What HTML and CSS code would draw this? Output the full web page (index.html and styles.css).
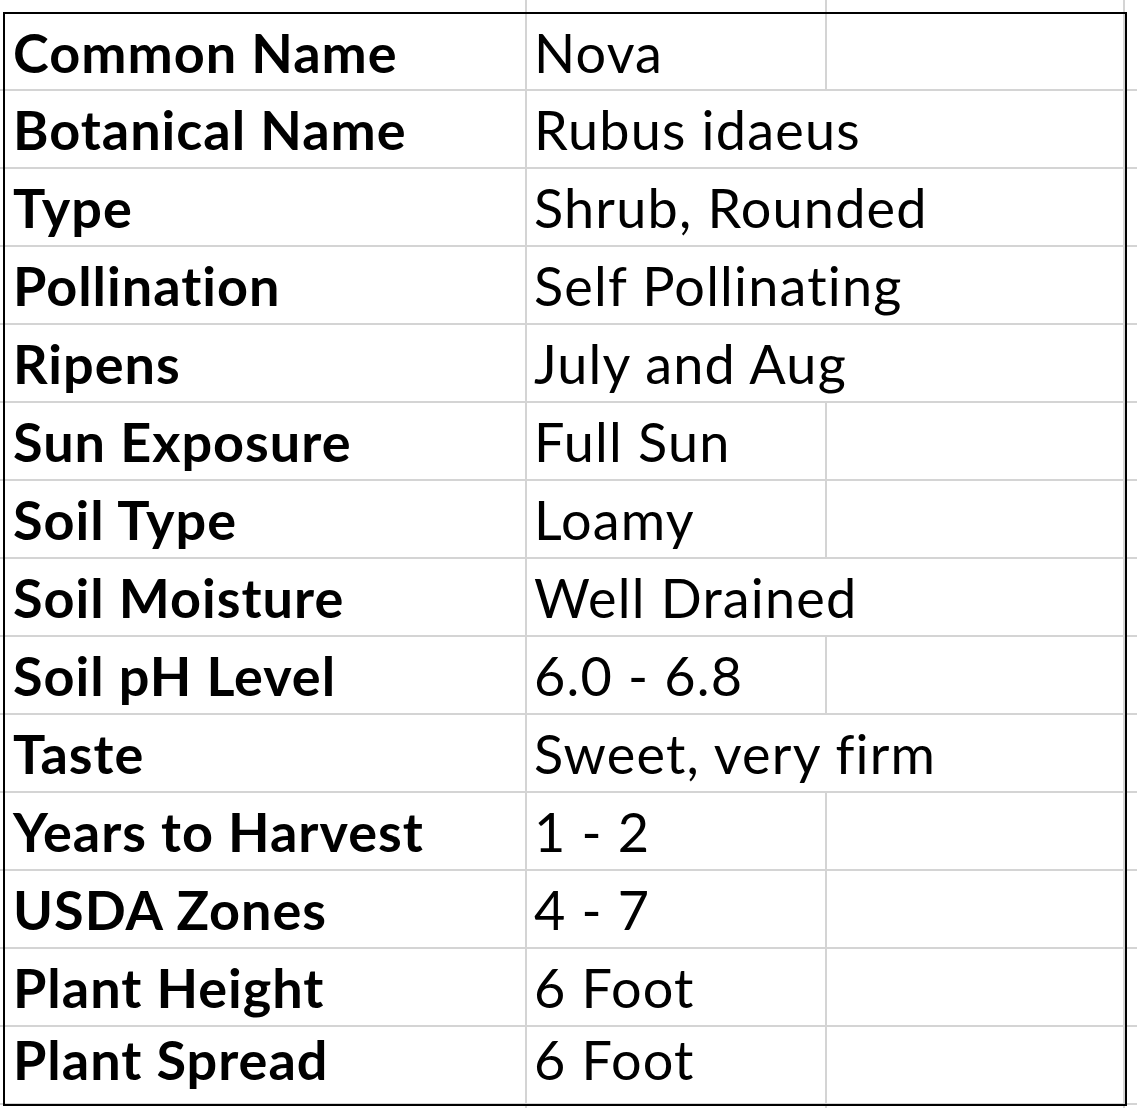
FILE: index.html
```html
<!DOCTYPE html>
<html lang="en">
<head>
<meta charset="utf-8">
<title>Nova Raspberry</title>
<link rel="stylesheet" href="styles.css">
</head>
<body>
<div class="sheet">
  <div class="row strip strip-top">
    <div class="stub"></div><div class="cell label"></div><div class="cell value"></div><div class="cell empty"></div><div class="stub"></div>
  </div>
  <div class="block">
    <div class="row first">
      <div class="stub"></div><div class="cell label">Common Name</div><div class="cell value">Nova</div><div class="cell empty"></div><div class="stub"></div>
    </div>
    <div class="row">
      <div class="stub"></div><div class="cell label">Botanical Name</div><div class="cell value wide">Rubus idaeus</div><div class="stub"></div>
    </div>
    <div class="row">
      <div class="stub"></div><div class="cell label">Type</div><div class="cell value wide">Shrub, Rounded</div><div class="stub"></div>
    </div>
    <div class="row">
      <div class="stub"></div><div class="cell label">Pollination</div><div class="cell value wide">Self Pollinating</div><div class="stub"></div>
    </div>
    <div class="row">
      <div class="stub"></div><div class="cell label">Ripens</div><div class="cell value wide">July and Aug</div><div class="stub"></div>
    </div>
    <div class="row">
      <div class="stub"></div><div class="cell label">Sun Exposure</div><div class="cell value">Full Sun</div><div class="cell empty"></div><div class="stub"></div>
    </div>
    <div class="row">
      <div class="stub"></div><div class="cell label">Soil Type</div><div class="cell value">Loamy</div><div class="cell empty"></div><div class="stub"></div>
    </div>
    <div class="row">
      <div class="stub"></div><div class="cell label">Soil Moisture</div><div class="cell value wide">Well Drained</div><div class="stub"></div>
    </div>
    <div class="row">
      <div class="stub"></div><div class="cell label">Soil pH Level</div><div class="cell value">6.0 - 6.8</div><div class="cell empty"></div><div class="stub"></div>
    </div>
    <div class="row">
      <div class="stub"></div><div class="cell label">Taste</div><div class="cell value wide">Sweet, very firm</div><div class="stub"></div>
    </div>
    <div class="row">
      <div class="stub"></div><div class="cell label">Years to Harvest</div><div class="cell value">1 - 2</div><div class="cell empty"></div><div class="stub"></div>
    </div>
    <div class="row">
      <div class="stub"></div><div class="cell label">USDA Zones</div><div class="cell value">4 - 7</div><div class="cell empty"></div><div class="stub"></div>
    </div>
    <div class="row">
      <div class="stub"></div><div class="cell label">Plant Height</div><div class="cell value">6 Foot</div><div class="cell empty"></div><div class="stub"></div>
    </div>
    <div class="row last">
      <div class="stub"></div><div class="cell label">Plant Spread</div><div class="cell value">6 Foot</div><div class="cell empty"></div><div class="stub"></div>
    </div>
  </div>
  <div class="row strip strip-bottom">
    <div class="stub"></div><div class="cell label"></div><div class="cell value"></div><div class="cell empty"></div><div class="stub"></div>
  </div>
</div>
</body>
</html>
```

FILE: styles.css
```css
* {
  box-sizing: border-box;
}

html, body {
  margin: 0;
  padding: 0;
  background: #ffffff;
}

body {
  width: 1137px;
  height: 1108px;
  overflow: hidden;
  font-family: "Lato", "Liberation Sans", sans-serif;
  font-variant-ligatures: none;
  font-feature-settings: "liga" 0, "clig" 0;
  color: #000000;
}

.sheet {
  display: flex;
  flex-direction: column;
  width: 1137px;
}

.block {
  position: relative;
  display: flex;
  flex-direction: column;
  flex-shrink: 0;
}

.block::after {
  content: "";
  position: absolute;
  left: 3px;
  right: 10px;
  top: -1px;
  bottom: -1px;
  border: 2px solid #000000;
  pointer-events: none;
  z-index: 2;
}

.row {
  display: grid;
  grid-template-columns: 5px 522px 300px 298px 12px;
  height: 78px;
  flex-shrink: 0;
  border-bottom: 2px solid #d4d4d4;
}

.strip {
  border-bottom: none;
}

.strip-top {
  height: 13px;
}

.strip-bottom {
  height: 3px;
}

.cell {
  border-right: 2px solid #d4d4d4;
  white-space: nowrap;
  overflow: visible;
  font-size: 54px;
  line-height: 54px;
  letter-spacing: 1px;
  padding-top: 12px;
  padding-left: 8px;
}

.label {
  font-weight: 700;
}

.value {
  font-weight: 400;
  padding-left: 7px;
  letter-spacing: 1.2px;
}

.value.wide {
  grid-column: span 2;
}

.strip .cell {
  padding: 0;
}

.row.first .cell {
  padding-top: 13px;
}

.row.last .cell {
  padding-top: 6px;
}
```
